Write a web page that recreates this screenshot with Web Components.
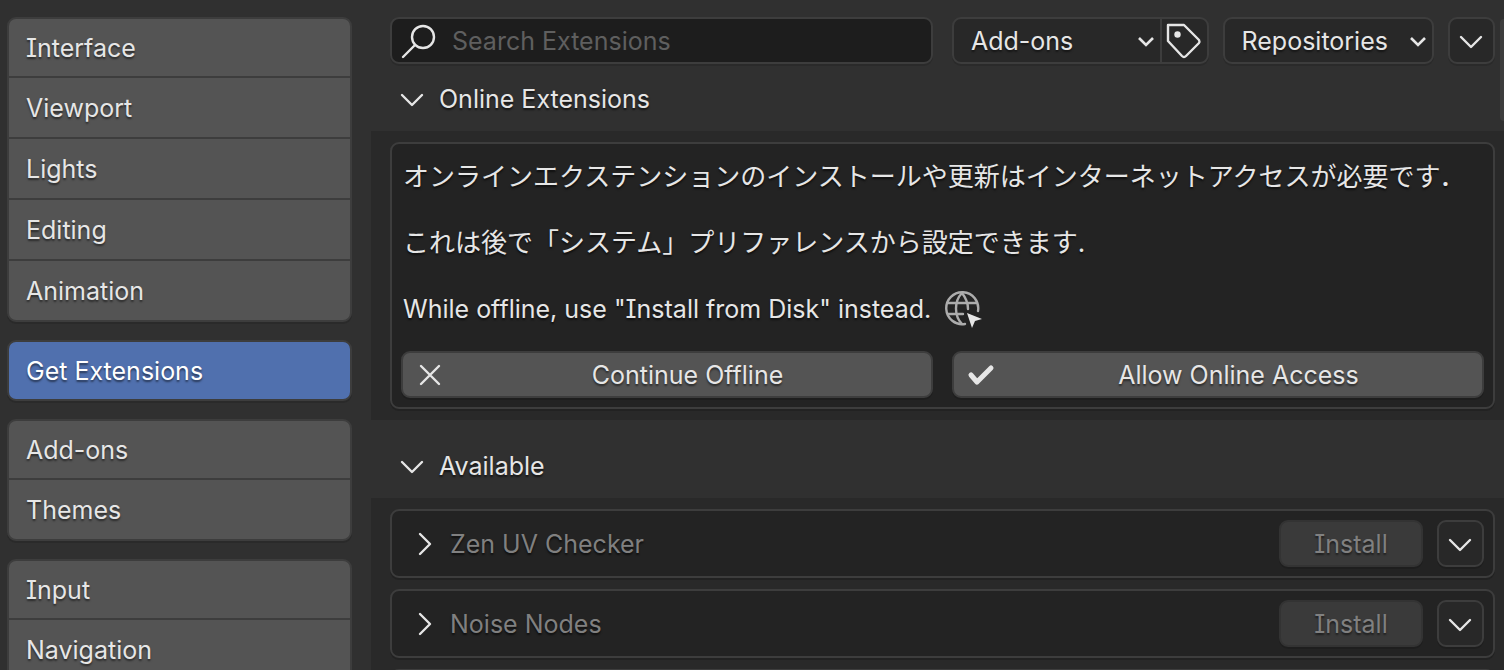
<!DOCTYPE html>
<html lang="ja">
<head>
<meta charset="utf-8">
<title>Preferences</title>
<style>
    html {
        background: #303030;
    }

    body {
        margin: 0;
        height: 100vh;
        overflow: hidden;
        color: #e6e6e6;
        font: 25px/32px Inter, "Noto Sans CJK JP", sans-serif;
        font-feature-settings: "cv08", "calt" 0;
    }
</style>
</head>
<body>
<preferences-window></preferences-window>

<script>
const base = `
    * {
        box-sizing: border-box;
    }

    button, input, select {
        margin: 0;
        font: inherit;
        font-feature-settings: inherit;
        color: inherit;
        text-shadow: inherit;
    }
`;

const icons = {
    search: '<circle cx="23" cy="14" r="11"/><path d="M15 22 3 34"/>',
    tag: '<path d="M2 2h16l15 15q1 2 0 3L20 33q-2 2-4 0L2 18z"/><circle cx="11.5" cy="11.5" r="3.2" fill="currentColor" stroke="none"/>',
    down: '<path d="m7 14 10 10 10-10"/>',
    right: '<path d="m15 8 10 10-10 10"/>',
    close: '<path d="m9 9 18 18M27 9 9 27"/>',
    check: '<path d="m8 18 6 7 14-14" stroke-width="5"/>',
    globe: `<g opacity=".7"><path d="M33 20A16 16 0 1 0 20 33"/><path d="M3 12h28M3 23h15M17 2C9 10 9 25 17 33M17 2c4 5 6 10 6 16"/></g>
        <path d="m22 22 15 6-7 2-3 7z" fill="currentColor" stroke="none"/>`
};

class UiIcon extends HTMLElement {
    constructor() {
        super();
        this.attachShadow({mode: 'open'});
    }

    connectedCallback() {
        this.shadowRoot.innerHTML = `
            <style>
                :host {
                    display: block;
                    flex: none;
                    width: 36px;
                    height: 36px;
                }

                svg {
                    display: block;
                    overflow: visible;
                }
            </style>
            <svg width="36" height="36" viewBox="0 0 36 36" fill="none" stroke="currentColor"
                stroke-width="2.4" stroke-linecap="round" stroke-linejoin="round" aria-hidden="true">
                ${icons[this.getAttribute('name')]}
            </svg>
        `;
    }
}

class NavGroup extends HTMLElement {
    constructor() {
        super();
        this.attachShadow({mode: 'open'}).innerHTML = `
            <style>
                :host {
                    display: block;
                    overflow: hidden;
                    flex: none;
                    border: 2px solid #3d3d3d;
                    border-radius: 9px;
                    background: #3d3d3d;
                    box-shadow: 0 2px 0 #2a2a2a;
                }

                div {
                    display: grid;
                    gap: 2px;
                }

                ::slotted(nav-item) {
                    height: 59px;
                }

                ::slotted(nav-item:first-child) {
                    height: 57px;
                }
            </style>
            <div><slot></slot></div>
        `;
    }
}

class NavItem extends HTMLElement {
    constructor() {
        super();
        this.attachShadow({mode: 'open'}).innerHTML = `
            <style>
                ${base}
                :host {
                    display: grid;
                }

                button {
                    padding: 0 17px;
                    border: 0;
                    background: #545454;
                    text-align: left;
                    text-shadow: 0 2px 2px #00000080;
                }

                :host([selected]) button {
                    background: #5070ae;
                    color: #fff;
                }
            </style>
            <button type="button"><slot></slot></button>
        `;
    }
}

class UiButton extends HTMLElement {
    constructor() {
        super();
        this.attachShadow({mode: 'open'});
    }

    connectedCallback() {
        const icon = this.getAttribute('icon');
        const label = this.getAttribute('label');
        this.shadowRoot.innerHTML = `
            <style>
                ${base}
                :host {
                    display: grid;
                    height: 47px;
                    min-width: 47px;
                }

                button {
                    display: flex;
                    align-items: center;
                    justify-content: center;
                    padding: 0;
                    border: 2px solid #3d3d3d;
                    border-radius: 9px;
                    background: #282828;
                    box-shadow: 0 2px 0 #00000020;
                    text-shadow: 0 2px 2px #00000080;
                }

                :host([raised]) button {
                    padding: 0 4px 0 9px;
                    background: #545454;
                }

                :host([raised]) .text {
                    flex: 1;
                }

                :host([joined]) button {
                    border-left: 0;
                    border-radius: 0 9px 9px 0;
                }

                button:disabled {
                    padding: 0;
                    border-color: #333;
                    background: #3a3a3a;
                    color: #808080;
                }
            </style>
            <button type="button" ${label ? `aria-label="${label}"` : ''} ${this.hasAttribute('disabled') ? 'disabled' : ''}>
                ${icon ? `<ui-icon name="${icon}"></ui-icon>` : ''}
                ${label ? '' : '<span class="text"><slot></slot></span>'}
            </button>
        `;
    }
}

class UiSelect extends HTMLElement {
    constructor() {
        super();
        this.attachShadow({mode: 'open'});
    }

    connectedCallback() {
        this.shadowRoot.innerHTML = `
            <style>
                ${base}
                :host {
                    display: grid;
                    grid-template-columns: 1fr;
                    align-items: center;
                    height: 47px;
                }

                select, svg {
                    grid-area: 1 / 1;
                }

                select {
                    appearance: none;
                    width: 100%;
                    height: 47px;
                    padding: 0 17px;
                    border: 2px solid #3d3d3d;
                    border-radius: 9px;
                    background: #282828;
                    box-shadow: 0 2px 0 #00000020;
                    text-shadow: 0 2px 2px #00000080;
                }

                :host([joined]) select {
                    border-radius: 9px 0 0 9px;
                }

                svg {
                    justify-self: end;
                    margin: 2px 8px 0 0;
                    pointer-events: none;
                }
            </style>
            <select aria-label="${this.getAttribute('label')}"><option>${this.getAttribute('value')}</option></select>
            <svg width="16" height="10" viewBox="0 0 16 10" fill="none" stroke="currentColor" stroke-width="2.6" aria-hidden="true">
                <path d="m1 1 7 7 7-7"/>
            </svg>
        `;
    }
}

class SearchField extends HTMLElement {
    constructor() {
        super();
        this.attachShadow({mode: 'open'}).innerHTML = `
            <style>
                ${base}
                :host {
                    display: block;
                }

                label {
                    display: flex;
                    align-items: center;
                    gap: 16px;
                    height: 47px;
                    padding: 0 9px 0 8px;
                    border: 2px solid #3d3d3d;
                    border-radius: 9px;
                    background: #1d1d1d;
                    box-shadow: 0 2px 0 #00000020;
                }

                input {
                    flex: 1;
                    min-width: 0;
                    padding: 0;
                    border: 0;
                    outline: 0;
                    background: none;
                }

                input::placeholder {
                    color: #5f5f5f;
                    opacity: 1;
                }
            </style>
            <label>
                <ui-icon name="search"></ui-icon>
                <input type="text" placeholder="Search Extensions" aria-label="Search Extensions">
            </label>
        `;
    }
}

class UiPanel extends HTMLElement {
    constructor() {
        super();
        this.attachShadow({mode: 'open'});
    }

    connectedCallback() {
        this.shadowRoot.innerHTML = `
            <style>
                ${base}
                :host {
                    display: block;
                    text-shadow: 0 2px 2px #00000099;
                }

                button {
                    display: flex;
                    align-items: center;
                    gap: 8px;
                    width: 100%;
                    height: 64px;
                    padding: 0 24px;
                    border: 0;
                    background: none;
                    text-align: left;
                }

                .body {
                    display: grid;
                    gap: 11px;
                    padding: 11px 9px 11px 19px;
                    background: #292929;
                }
            </style>
            <button type="button" aria-expanded="true">
                <ui-icon name="down"></ui-icon>
                <span>${this.getAttribute('heading')}</span>
            </button>
            <div class="body"><slot></slot></div>
        `;
    }
}

class OnlineNotice extends HTMLElement {
    constructor() {
        super();
        this.attachShadow({mode: 'open'}).innerHTML = `
            <style>
                ${base}
                :host {
                    display: block;
                    padding: 0 9px 9px;
                    border: 2px solid #3d3d3d;
                    border-radius: 9px;
                    background: #232323;
                    box-shadow: 0 2px 0 #222;
                }

                p {
                    display: flex;
                    align-items: center;
                    gap: 14px;
                    height: 66px;
                    margin: 0;
                    padding: 0 2px;
                    white-space: nowrap;
                }

                .kana {
                    font-size: 26px;
                }

                .actions {
                    display: grid;
                    grid-template-columns: 1fr 1fr;
                    gap: 19px;
                    padding-top: 9px;
                }
            </style>
            <p class="kana">オンラインエクステンションのインストールや更新はインターネットアクセスが必要です．</p>
            <p class="kana">これは後で「システム」プリファレンスから設定できます.</p>
            <p>While offline, use "Install from Disk" instead. <ui-icon name="globe"></ui-icon></p>
            <div class="actions">
                <ui-button raised icon="close">Continue Offline</ui-button>
                <ui-button raised icon="check">Allow Online Access</ui-button>
            </div>
        `;
    }
}

class ExtensionRow extends HTMLElement {
    constructor() {
        super();
        this.attachShadow({mode: 'open'}).innerHTML = `
            <style>
                ${base}
                :host {
                    display: flex;
                    align-items: center;
                    height: 69px;
                    padding: 0 9px 0 13px;
                    border: 2px solid #3d3d3d;
                    border-radius: 9px;
                    background: #232323;
                    box-shadow: 0 2px 0 #222;
                }

                .toggle {
                    padding: 0;
                    border: 0;
                    background: none;
                }

                .name {
                    flex: 1;
                    padding-left: 9px;
                    color: #808080;
                }

                .install {
                    width: 144px;
                    margin-right: 14px;
                }

                :host([empty]) .toggle,
                :host([empty]) .name,
                :host([empty]) ui-button {
                    display: none;
                }
            </style>
            <button class="toggle" type="button" aria-label="Show details"><ui-icon name="right"></ui-icon></button>
            <span class="name"><slot></slot></span>
            <ui-button class="install" disabled>Install</ui-button>
            <ui-button icon="down" label="Extension menu"></ui-button>
        `;
    }
}

class PreferencesWindow extends HTMLElement {
    constructor() {
        super();
        this.attachShadow({mode: 'open'}).innerHTML = `
            <style>
                ${base}
                :host {
                    display: grid;
                    grid-template-columns: 345px 1fr;
                    gap: 19px;
                    height: 100%;
                    overflow: hidden;
                    padding: 17px 0 0 7px;
                    box-sizing: border-box;
                }

                nav {
                    display: flex;
                    flex-direction: column;
                    gap: 18px;
                    min-height: 0;
                }

                main {
                    position: relative;
                    min-width: 0;
                }

                .toolbar {
                    display: grid;
                    grid-template-columns: 1fr 1fr;
                    gap: 19px;
                    padding: 0 9px 3px 19px;
                }

                .filters {
                    display: flex;
                    gap: 14px;
                }

                .type {
                    display: flex;
                    flex: 256;
                }

                .type ui-select {
                    flex: 1;
                }

                .repositories {
                    flex: 211;
                }

                ui-panel + ui-panel {
                    margin-top: 14px;
                }

                /* scrollbar handle on the region edge */
                .handle {
                    position: absolute;
                    top: 2px;
                    right: 0;
                    width: 4px;
                    height: 102px;
                    border-radius: 4px 0 0 4px;
                    background: #3d3d3d;
                }
            </style>
            <nav>
                <nav-group>
                    <nav-item>Interface</nav-item>
                    <nav-item>Viewport</nav-item>
                    <nav-item>Lights</nav-item>
                    <nav-item>Editing</nav-item>
                    <nav-item>Animation</nav-item>
                </nav-group>
                <nav-group>
                    <nav-item selected>Get Extensions</nav-item>
                </nav-group>
                <nav-group>
                    <nav-item>Add-ons</nav-item>
                    <nav-item>Themes</nav-item>
                </nav-group>
                <nav-group>
                    <nav-item>Input</nav-item>
                    <nav-item>Navigation</nav-item>
                </nav-group>
            </nav>
            <main>
                <div class="toolbar">
                    <search-field></search-field>
                    <div class="filters">
                        <div class="type">
                            <ui-select joined label="Type" value="Add-ons"></ui-select>
                            <ui-button joined icon="tag" label="Tags"></ui-button>
                        </div>
                        <ui-select class="repositories" label="Repositories" value="Repositories"></ui-select>
                        <ui-button icon="down" label="Settings"></ui-button>
                    </div>
                </div>
                <ui-panel heading="Online Extensions">
                    <online-notice></online-notice>
                </ui-panel>
                <ui-panel heading="Available">
                    <extension-row>Zen UV Checker</extension-row>
                    <extension-row>Noise Nodes</extension-row>
                    <extension-row empty></extension-row>
                </ui-panel>
                <div class="handle"></div>
            </main>
        `;
    }
}

window.customElements.define('ui-icon', UiIcon);
window.customElements.define('nav-group', NavGroup);
window.customElements.define('nav-item', NavItem);
window.customElements.define('ui-button', UiButton);
window.customElements.define('ui-select', UiSelect);
window.customElements.define('search-field', SearchField);
window.customElements.define('ui-panel', UiPanel);
window.customElements.define('online-notice', OnlineNotice);
window.customElements.define('extension-row', ExtensionRow);
window.customElements.define('preferences-window', PreferencesWindow);
</script>
</body>
</html>
